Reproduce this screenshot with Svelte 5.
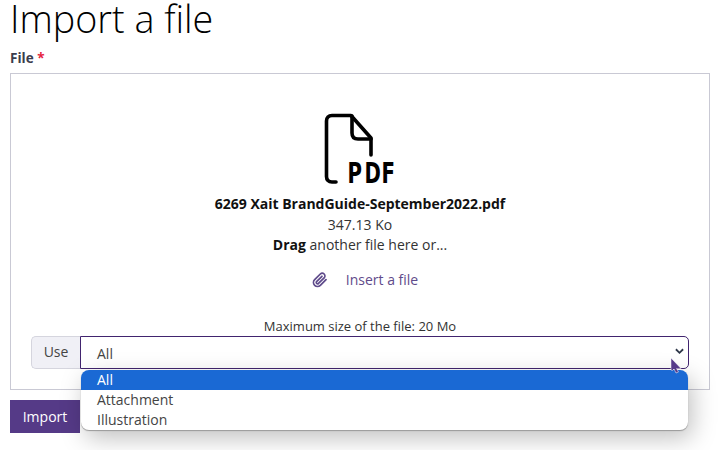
<script>
  let options = ['All', 'Attachment', 'Illustration'];
  let selected = 'All';
</script>

<main class="page">
  <h1>Import a file</h1>
  <div class="label">File <span class="req">*</span></div>
  <section class="drop">
    <svg class="pdf" width="76" height="72" viewBox="0 0 76 72" fill="none" stroke="#000" stroke-width="3.6" stroke-linecap="round" stroke-linejoin="round">
      <path d="M15 69H11C7.500 69 5.500 67 5.500 63.500V8C5.500 4.500 7.500 2.500 11 2.500H30L50 25V42" />
      <path d="M31 3V20C31 24 33 26 37 26H50" />
      <text class="pdf-label" x="39 64 89" y="70.500" transform="scale(.68 1)">PDF</text>
    </svg>
    <div class="name">6269 Xait BrandGuide-September2022.pdf</div>
    <div class="size">347.13 Ko</div>
    <div class="hint"><b>Drag</b> another file here or...</div>
    <div class="insert">
      <svg width="16" height="16" viewBox="0 0 24 24" fill="none" stroke="#5f4b8b" stroke-width="2.600" stroke-linecap="round" stroke-linejoin="round">
        <path d="M21 11.500l-8.500 8.500a6 6 0 0 1-8.500-8.500l8.500-8.500a4 4 0 0 1 5.700 5.700l-8.500 8.500a2 2 0 0 1-2.800-2.800l8-8" />
      </svg>
      <span>Insert a file</span>
    </div>
    <div class="max">Maximum size of the file: 20 Mo</div>
    <div class="use">
      <span class="addon">Use</span>
      <div class="select">
        <span>{selected}</span>
        <svg class="chev" width="9" height="7" viewBox="0 0 10 7" fill="none" stroke="#2d3648" stroke-width="2">
          <path d="M1 1l4 4 4-4" />
        </svg>
        <ul class="menu">
          {#each options as o}
            <li class:active={o === selected}>{o}</li>
          {/each}
        </ul>
        <svg class="cursor" width="12" height="18" viewBox="0 0 12 18">
          <path d="M1 1v12l1.500 0.500 1.500-1.500 2 4 2.500-1-2-3.500H11z" fill="#553a8a" stroke="#fff" stroke-width=".5" />
        </svg>
      </div>
    </div>
  </section>
  <button class="submit">Import</button>
</main>

<style>
  :global(body) {
    margin: 0;
    background: #fff;
    font-family: "Open Sans", sans-serif;
    overflow: hidden;
  }
  .page {
    padding: 0 10px;
    height: 450px;
    box-sizing: border-box;
    color: #2d3142;
  }
  h1 {
    margin: 0;
    height: 46px;
    font-size: 37.700px;
    font-weight: 300;
    line-height: 38px;
    color: #000;
  }
  .label {
    height: 27px;
    font-size: 13.500px;
    font-weight: 700;
    line-height: 24px;
    color: #3a3d4d;
  }
  .req {
    color: #e5243f;
  }
  .drop {
    box-sizing: border-box;
    height: 317px;
    border: 1px solid #c9c9d4;
    display: flex;
    flex-direction: column;
    align-items: center;
    padding-top: 39px;
    font-size: 14px;
  }
  .pdf {
    margin-left: -3px;
    flex: none;
  }
  .pdf-label {
    font-family: "DejaVu Sans", sans-serif;
    font-size: 29px;
    font-weight: 700;
    fill: #000;
    stroke: none;
  }
  .name {
    margin-top: 8px;
    font-weight: 700;
    line-height: 21px;
    color: #111;
  }
  .size, .hint {
    line-height: 21px;
    color: #333;
  }
  .hint {
    margin-top: -1px;
  }
  .hint b {
    color: #111;
  }
  .insert {
    display: flex;
    align-items: center;
    gap: 18px;
    margin-top: 14px;
    margin-left: 10px;
    line-height: 21px;
    color: #5f4b8b;
  }
  .max {
    margin-top: 27px;
    font-size: 13px;
    line-height: 18px;
    color: #333;
  }
  .use {
    display: flex;
    align-self: stretch;
    margin: 1px 20px 0;
    height: 33px;
  }
  .addon {
    box-sizing: border-box;
    width: 49px;
    border: 1px solid #d5d5de;
    border-right: 0;
    border-radius: 5px 0 0 5px;
    background: #f0f0f6;
    font-size: 14px;
    line-height: 29px;
    text-align: center;
    color: #444;
  }
  .select {
    position: relative;
    flex: 1;
    box-sizing: border-box;
    border: 1px solid #41246f;
    border-radius: 0 5px 5px 0;
    background: #fff;
    padding-left: 16px;
    font-size: 14px;
    line-height: 33px;
    color: #444;
  }
  .chev {
    position: absolute;
    right: 4px;
    top: 11px;
  }
  .menu {
    position: absolute;
    left: 0;
    right: 0;
    top: 33px;
    margin: 0;
    padding: 0;
    list-style: none;
    background: #fff;
    border-radius: 8px;
    overflow: hidden;
    box-shadow: 0 1px 1px #999, 4px 8px 24px rgba(0, 0, 0, 0.25);
    line-height: 20px;
    font-size: 14px;
    color: #444;
  }
  .menu li {
    padding-left: 16px;
    height: 20px;
  }
  .menu li.active {
    background: #1a69d4;
    color: #fff;
  }
  .cursor {
    position: absolute;
    right: 6px;
    top: 20px;
    z-index: 2;
  }
  .submit {
    display: block;
    width: 70px;
    height: 33px;
    margin-top: 10px;
    padding: 0;
    border: 0;
    background: #553a87;
    color: #fff;
    font: 14px "Open Sans", sans-serif;
  }
</style>
